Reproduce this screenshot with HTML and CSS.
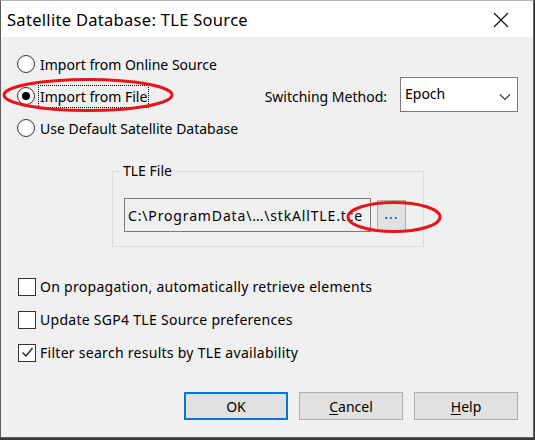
FILE: index.html
```html
<!DOCTYPE html>
<html>
<head>
<meta charset="utf-8">
<link rel="stylesheet" href="styles.css">
</head>
<body>
<div class="window">
  <div class="titlebar">
    <span class="title">Satellite Database: TLE Source</span>
    <svg class="close" width="16" height="16" viewBox="0 0 16 16"><path d="M1 1 L15 15 M15 1 L1 15" stroke="#111" stroke-width="1.2" fill="none"/></svg>
  </div>
  <div class="content">
    <div class="options">
      <label class="radio r1"><span class="circle"></span><span class="txt">Import from Online Source</span></label>
      <label class="radio r2"><span class="circle on"></span><span class="txt focus">Import from File</span></label>
      <div class="switch">
        <span class="switch-label">Switching Method:</span>
        <div class="combo"><span>Epoch</span><svg width="12" height="8" viewBox="0 0 12 8"><path d="M1 1.5 L6 6.5 L11 1.5" stroke="#333" stroke-width="1.1" fill="none"/></svg></div>
      </div>
      <label class="radio r3"><span class="circle"></span><span class="txt">Use Default Satellite Database</span></label>
    </div>
    <fieldset class="group">
      <legend>TLE File</legend>
      <div class="file-row">
        <div class="field">C:\ProgramData\…\stkAllTLE.tce</div>
        <button class="browse">...</button>
      </div>
    </fieldset>
    <div class="checks">
      <label class="check"><span class="box"></span>On propagation, automatically retrieve elements</label>
      <label class="check"><span class="box"></span>Update SGP4 TLE Source preferences</label>
      <label class="check"><span class="box"><svg width="15" height="15" viewBox="0 0 15 15"><path d="M2.5 7.5 L6 11 L12.5 3" stroke="#222" stroke-width="1.3" fill="none"/></svg></span>Filter search results by TLE availability</label>
    </div>
    <div class="buttons">
      <button class="btn default">OK</button>
      <button class="btn"><u>C</u>ancel</button>
      <button class="btn"><u>H</u>elp</button>
    </div>
  </div>
  <svg class="mark mark1" width="172" height="36" viewBox="0 0 172 36"><ellipse cx="86" cy="18" rx="84" ry="15.5" stroke="#e8141b" stroke-width="3" fill="none"/></svg>
  <svg class="mark mark2" width="96" height="34" viewBox="0 0 96 34"><ellipse cx="48" cy="17" rx="46" ry="14.5" stroke="#e8141b" stroke-width="3" fill="none"/></svg>
</div>
</body>
</html>
```

FILE: styles.css
```css
* { box-sizing: border-box; }
html, body { margin: 0; padding: 0; background: #3a3a3a; }
body { width: 535px; height: 440px; overflow: hidden; font-family: "Noto Sans", "Liberation Sans", sans-serif; font-size: 14px; color: #000; }

.window {
  position: relative;
  width: 534px;
  height: 438px;
  background: #f0f0f0;
  border: 1px solid #5e5e5e;
  border-top-color: #b5b5b5;
  display: flex;
  flex-direction: column;
}

.titlebar {
  height: 36px;
  background: #fff;
  display: flex;
  align-items: center;
  justify-content: space-between;
  padding: 0 24px 0 6px;
  flex: none;
}
.title { font-size: 16.5px; letter-spacing: 0.3px; }
.close { display: block; margin-top: 2px; }

.content {
  flex: 1;
  padding: 11px 15px 0 16px;
  display: flex;
  flex-direction: column;
}

.options {
  display: grid;
  grid-template-columns: 1fr auto;
  grid-template-rows: 32px 32px 32px;
}
.radio { display: flex; align-items: center; grid-column: 1; white-space: nowrap; }
.r1 { grid-row: 1; }
.r2 { grid-row: 2; }
.r3 { grid-row: 3; }
.circle {
  width: 18px; height: 18px;
  border: 1px solid #333;
  border-radius: 50%;
  background: #fff;
  margin-right: 4px;
  flex: none;
  display: flex; align-items: center; justify-content: center;
}
.circle.on::after {
  content: "";
  width: 8px; height: 8px;
  border-radius: 50%;
  background: #000;
}
.txt { padding: 1px 1px; }
.focus { outline: 1px dotted #000; outline-offset: 0; }

.switch {
  grid-column: 2;
  grid-row: 2;
  display: flex;
  align-items: center;
  gap: 13px;
}
.combo {
  width: 118px; height: 35px;
  background: #fff;
  border: 1px solid #7a7a7a;
  display: flex;
  align-items: center;
  justify-content: space-between;
  padding: 0 6px 2px 4px;
  margin-top: -3px;
}
.combo svg { margin-top: 6px; }

.group {
  margin: 18px 0 0 95px;
  width: 312px;
  border: 1px solid #dcdcdc;
  padding: 18px 11px 14px 11px;
}
.group legend { padding: 0 2px; margin-left: -3px; line-height: 18px; }
.file-row { display: flex; align-items: flex-end; gap: 6px; }
.field {
  width: 247px; height: 34px;
  border: 1px solid #7a7a7a;
  background: #f0f0f0;
  padding: 0 0 0 3px;
  display: flex; align-items: center;
  white-space: nowrap;
  overflow: hidden;
  letter-spacing: 0.85px;
}
.browse {
  width: 29px; height: 32px;
  background: #e1e1e1;
  border: 1px solid #adadad;
  font-family: inherit;
  font-size: 14px;
  color: #1a3a7a;
  padding: 0 0 6px 0;
  margin-bottom: 0;
  letter-spacing: 1px;
}

.checks { margin-top: 23px; display: flex; flex-direction: column; letter-spacing: 0.28px; }
.check { height: 33px; display: flex; align-items: center; padding-left: 1px; white-space: nowrap; }
.box {
  width: 18px; height: 18px;
  border: 1px solid #333;
  background: #fff;
  margin-right: 4px;
  flex: none;
  display: flex; align-items: center; justify-content: center;
}
.box svg { display: block; }

.buttons {
  margin-top: 23px;
  display: flex;
  justify-content: flex-end;
  gap: 11px;
}
.btn {
  width: 104px; height: 28px;
  background: #e1e1e1;
  border: 1px solid #adadad;
  font-family: inherit;
  font-size: 14px;
  color: #000;
  padding: 0;
}
.btn.default { border: 2px solid #0078d7; }
.btn u { text-decoration-thickness: 1px; text-underline-offset: 2px; }

.mark { position: absolute; pointer-events: none; }
.mark1 { left: 1px; top: 76px; }
.mark2 { left: 345px; top: 199px; }
```
